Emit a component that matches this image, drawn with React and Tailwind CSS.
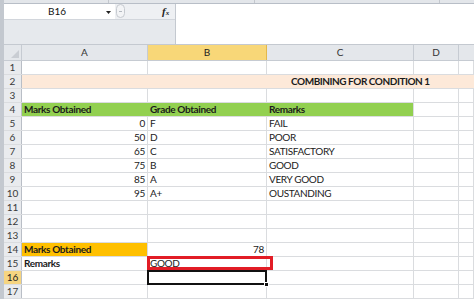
import React from 'react';

// column widths of the sheet (row header, A, B, C, D, E)
const COLS = ['w-[18px]', 'w-[126px]', 'w-[119px]', 'w-[147px]', 'w-[45px]', 'flex-1'];

const grades = [
  [5, '0', 'F', 'FAIL'],
  [6, '50', 'D', 'POOR'],
  [7, '65', 'C', 'SATISFACTORY'],
  [8, '75', 'B', 'GOOD'],
  [9, '85', 'A', 'VERY GOOD'],
  [10, '95', 'A+', 'OUSTANDING'],
];

const Cell = ({ w, className = '', children }) => (
  <div className={`${w} h-full shrink-0 border-r border-[#dadcdf] flex items-center overflow-visible whitespace-nowrap relative ${className}`}>
    {children}
  </div>
);

const Row = ({ n, active, children, className = '' }) => (
  <div className={`flex h-[14px] border-b border-[#dadcdf] ${className}`}>
    <div
      className={`${COLS[0]} shrink-0 h-full flex items-center justify-center text-[10px] tracking-normal border-r border-[#b9bec6] ${
        active ? 'bg-[#f6d581] text-[#222]' : 'bg-[#e9ebee] text-[#3a3a3a]'
      }`}
    >
      {n}
    </div>
    {children}
  </div>
);

const Empty = ({ from = 1, bg = '' }) =>
  COLS.slice(from).map((w, i) => <Cell key={i} w={w} className={bg} />);

export default function App() {
  return (
    <div className="w-[474px] h-[299px] overflow-hidden bg-white flex text-[#1b1b1b]" style={{ fontFamily: 'Lato, "Open Sans", sans-serif' }}>
      <div className="w-[4px] shrink-0 bg-[#c3c8cf]" />
      <div className="flex-1 flex flex-col min-w-0">
        {/* ribbon edge */}
        <div className="h-[4px] bg-[#e3e6ea] border-b border-[#b8bec7] flex">
          <div className="w-[104px]" />
          <div className="w-px bg-[#c3c7cd]" />
          <div className="w-[145px]" />
          <div className="w-px bg-[#c3c7cd]" />
          <div className="w-[184px]" />
          <div className="w-px bg-[#c3c7cd]" />
        </div>

        {/* formula bar */}
        <div className="h-[44px] flex border-b border-[#c4c9d0]">
          <div className="w-[172px] shrink-0 flex flex-col bg-[#e6e9ed] border-r border-[#c4c9d0]">
            <div className="h-[16px] flex border-b border-[#d2d6dc]">
              <div className="w-[111px] bg-white flex items-center relative">
                <span className="ml-[44px] text-[10px] text-[#111]">B16</span>
                <svg className="absolute left-[102px] top-[7px]" width="5" height="3" viewBox="0 0 5 3">
                  <path d="M0 0h5L2.5 3z" fill="#222" />
                </svg>
              </div>
              <div className="flex-1 bg-[#eef0f3] flex items-center relative">
                <div className="ml-[1px] w-[9px] h-[14px] rounded-full border border-[#c6cad0] bg-[#f3f4f6] flex items-center justify-center">
                  <div className="w-[3px] h-px bg-[#b4b9c0]" />
                </div>
                <span className="absolute left-[47px] top-[1px] text-[11px] leading-[13px] italic font-bold text-[#222]" style={{ fontFamily: '"Liberation Serif", serif' }}>
                  f<span className="text-[7px]">x</span>
                </span>
              </div>
            </div>
            <div className="flex-1" />
          </div>
          <div className="flex-1 bg-white" />
        </div>

        {/* column headers */}
        <div className="flex h-[17px] border-b border-[#c6cbd2] text-[10px] text-[#333]">
          <div className={`${COLS[0]} shrink-0 bg-[#e4e7eb] border-r border-[#c6cbd2] relative`}>
            <svg className="absolute right-[2px] bottom-[2px]" width="8" height="8" viewBox="0 0 8 8">
              <path d="M8 0V8H0z" fill="#c9cdd3" />
            </svg>
          </div>
          <div className={`${COLS[1]} shrink-0 bg-[#e4e7eb] border-r border-[#c6cbd2] flex items-center justify-center`}>A</div>
          <div className={`${COLS[2]} shrink-0 bg-[#f8d778] border-r border-[#e3b84b] flex items-center justify-center text-[#222]`}>B</div>
          <div className={`${COLS[3]} shrink-0 bg-[#e4e7eb] border-r border-[#c6cbd2] flex items-center justify-center`}>C</div>
          <div className={`${COLS[4]} shrink-0 bg-[#e4e7eb] border-r border-[#c6cbd2] flex items-center justify-center`}>D</div>
          <div className="flex-1 bg-[#e4e7eb]" />
        </div>

        {/* sheet */}
        <div className="flex flex-col text-[10px] tracking-[-0.35px]">
          <Row n={1}><Empty /></Row>
          <Row n={2} className="bg-[#fde9d9]">
            <Cell w={COLS[1]} className="border-r-[#fde9d9]" />
            <Cell w={COLS[2]} className="border-r-[#fde9d9]" />
            <Cell w={COLS[3]} className="border-r-[#fde9d9]">
              <span className="absolute left-[24px] font-bold tracking-[-0.45px]">COMBINING FOR CONDITION 1</span>
            </Cell>
            <Cell w={COLS[4]} className="border-r-[#fde9d9]" />
            <Cell w={COLS[5]} className="border-r-[#fde9d9]" />
          </Row>
          <Row n={3}><Empty /></Row>
          <Row n={4}>
            <Cell w={COLS[1]} className="bg-[#92d050] border-r-[#92d050] font-bold pl-[2px]">Marks Obtained</Cell>
            <Cell w={COLS[2]} className="bg-[#92d050] border-r-[#92d050] font-bold pl-[2px]">Grade Obtained</Cell>
            <Cell w={COLS[3]} className="bg-[#92d050] font-bold pl-[2px]">Remarks</Cell>
            <Empty from={4} />
          </Row>
          {grades.map(([n, m, g, r]) => (
            <Row key={n} n={n}>
              <Cell w={COLS[1]} className="justify-end pr-[2px]">{m}</Cell>
              <Cell w={COLS[2]} className="pl-[2px]">{g}</Cell>
              <Cell w={COLS[3]} className="pl-[2px]">{r}</Cell>
              <Empty from={4} />
            </Row>
          ))}
          <Row n={11}><Empty /></Row>
          <Row n={12}><Empty /></Row>
          <Row n={13}><Empty /></Row>
          <Row n={14}>
            <Cell w={COLS[1]} className="bg-[#ffc000] font-bold pl-[2px]">Marks Obtained</Cell>
            <Cell w={COLS[2]} className="justify-end pr-[2px]">78</Cell>
            <Empty from={3} />
          </Row>
          <Row n={15}>
            <Cell w={COLS[1]} className="font-bold pl-[2px]">Remarks</Cell>
            <Cell w={COLS[2]} className="pl-[2px]">
              GOOD
              <div className="absolute left-[-1px] top-[-1px] w-[126px] h-[14px] border-[3px] border-[#e21d26]" />
            </Cell>
            <Empty from={3} />
          </Row>
          <Row n={16} active>
            <Cell w={COLS[1]} />
            <Cell w={COLS[2]} className="z-10">
              <div className="absolute left-[-1px] top-[-1px] w-[120px] h-[15px] border-2 border-[#111]" />
              <div className="absolute right-[-3px] bottom-[-3px] w-[5px] h-[5px] bg-[#111] border border-white" />
            </Cell>
            <Empty from={3} />
          </Row>
          <Row n={17}><Empty /></Row>
        </div>
      </div>
    </div>
  );
}
